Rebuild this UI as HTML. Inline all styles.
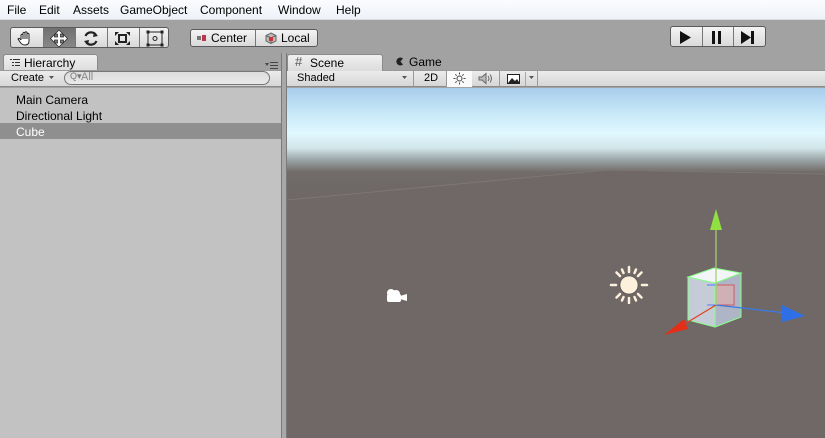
<!DOCTYPE html>
<html><head><style>
*{margin:0;padding:0;box-sizing:border-box}
body{width:825px;height:438px;overflow:hidden;background:#a2a2a2;font-family:"Liberation Sans","DejaVu Sans",sans-serif;font-size:12px;color:#000;position:relative}
.abs{position:absolute}
#menu{left:0;top:0;width:825px;height:20px;background:linear-gradient(#fbfcfe,#eef2f8);border-bottom:1px solid #d8dde6}
#menu span{position:absolute;top:3px;font-size:12px}
.btn{position:absolute;background:linear-gradient(#f4f4f4,#d9d9d9);border:1px solid #5a5a5a;border-radius:3px}
.seg{position:absolute;top:0;height:100%;border-left:1px solid #777}
.tab{position:absolute;background:linear-gradient(#f0f0f0,#dcdcdc);border:1px solid #8a8a8a;border-bottom:none;border-radius:3px 3px 0 0;font-size:12px}
.bar{position:absolute;height:17px;background:linear-gradient(#ececec,#d6d6d6);border-bottom:1px solid #8a8a8a;border-top:1px solid #9a9a9a}
</style></head><body>
<div id="menu" class="abs">
<span style="left:7px">File</span><span style="left:39px">Edit</span><span style="left:73px">Assets</span><span style="left:120px">GameObject</span><span style="left:200px">Component</span><span style="left:278px">Window</span><span style="left:336px">Help</span>
</div>
<div class="btn" style="left:10px;top:27px;width:159px;height:21px;overflow:hidden">
 <div class="abs" style="left:32px;top:0;width:32px;height:21px;background:linear-gradient(#707070,#8a8a8a)"></div>
 <div class="seg" style="left:32px"></div><div class="seg" style="left:64px"></div><div class="seg" style="left:96px"></div><div class="seg" style="left:128px"></div>
 <svg class="abs" style="left:0;top:0" width="159" height="21">
  <path d="M10 12 L10 7 Q11 5.5 12 7 L12 11 L12 5 Q13 3.5 14 5 L14 11 L14 4.5 Q15 3 16 4.5 L16 11 L16 6 Q17 4.5 18 6 L18 13 Q18 17 14 17 Q11 17 9 14 L7 11 Q8 9.5 10 12" fill="#fff" stroke="#222" stroke-width="1"/>
  <g fill="#fff" stroke="#222" stroke-width=".7"><path d="M48 2 L52 6 L49.5 6 L49.5 9 L52.5 9 L52.5 6.5 L56.5 10.5 L52.5 14.5 L52.5 12 L49.5 12 L49.5 15 L52 15 L48 19 L44 15 L46.5 15 L46.5 12 L43.5 12 L43.5 14.5 L39.5 10.5 L43.5 6.5 L43.5 9 L46.5 9 L46.5 6 L44 6Z"/></g>
  <path d="M74.5 8 A6 6 0 0 1 85 7 M85.5 13 A6 6 0 0 1 75 14" fill="none" stroke="#222" stroke-width="2.2"/>
  <path d="M83 4 L87 8 L82 9Z M77 17 L73 13 L78 12Z" fill="#222"/>
  <rect x="108" y="7" width="7" height="7" fill="none" stroke="#222" stroke-width="2"/>
  <path d="M104 4 L108 4 L104 8Z M119 4 L115 4 L119 8Z M104 17 L108 17 L104 13Z M119 17 L115 17 L119 13Z" fill="#222"/>
  <rect x="137" y="4" width="14" height="13" fill="none" stroke="#222" stroke-width="1"/>
  <circle cx="144" cy="10.5" r="2" fill="none" stroke="#222"/>
  <g fill="#222"><rect x="135.5" y="2.5" width="3" height="3"/><rect x="149.5" y="2.5" width="3" height="3"/><rect x="135.5" y="15.5" width="3" height="3"/><rect x="149.5" y="15.5" width="3" height="3"/></g>
 </svg>
</div>
<div class="btn" style="left:190px;top:29px;width:128px;height:18px">
 <div class="seg" style="left:64px"></div>
 <svg class="abs" style="left:6px;top:4px" width="10" height="9"><rect x="0" y="2" width="4" height="4" fill="#777"/><rect x="5" y="1" width="4" height="6" fill="#c0344a"/></svg>
 <span class="abs" style="left:20px;top:1px">Center</span>
 <svg class="abs" style="left:74px;top:2px" width="12" height="12"><path d="M6 1 L11 3.5 L11 9 L6 11.5 L1 9 L1 3.5Z" fill="#bbb" stroke="#666"/><path d="M6 6 L6 11 M1 3.5 L6 6 L11 3.5" stroke="#666" fill="none"/><rect x="4" y="5" width="4" height="4" fill="#c33"/></svg>
 <span class="abs" style="left:90px;top:1px">Local</span>
</div>
<div class="btn" style="left:670px;top:26px;width:96px;height:21px">
 <div class="seg" style="left:31px"></div><div class="seg" style="left:62px"></div>
 <svg class="abs" style="left:0;top:0" width="96" height="21"><path d="M9 4 L20 10.5 L9 17Z" fill="#111"/><rect x="41" y="4" width="3" height="13" fill="#111"/><rect x="47" y="4" width="3" height="13" fill="#111"/><path d="M70 4 L80 10.5 L70 17Z" fill="#111"/><rect x="80" y="4" width="3" height="13" fill="#111"/></svg>
</div>
<div class="tab" style="left:3px;top:54px;width:95px;height:17px"><span class="abs" style="left:20px;top:1px">Hierarchy</span>
 <svg class="abs" style="left:6px;top:4px" width="10" height="8"><g fill="#333"><rect x="0" y="0" width="2" height="1"/><rect x="3" y="0" width="7" height="1"/><rect x="2" y="3" width="2" height="1"/><rect x="5" y="3" width="5" height="1"/><rect x="2" y="6" width="2" height="1"/><rect x="5" y="6" width="5" height="1"/></g></svg></div>
<svg class="abs" style="left:265px;top:61px" width="14" height="8"><path d="M0 2 L4 2 L2 5Z" fill="#444"/><g fill="#444"><rect x="5" y="1" width="8" height="1"/><rect x="5" y="4" width="8" height="1"/><rect x="5" y="7" width="8" height="1"/></g></svg>
<div class="bar" style="left:0;top:70px;width:282px"></div>
<span class="abs" style="left:11px;top:72px;font-size:11px">Create</span>
<svg class="abs" style="left:49px;top:76px" width="6" height="4"><path d="M0 0 L5 0 L2.5 3Z" fill="#555"/></svg>
<div class="abs" style="left:64px;top:71px;width:206px;height:14px;border:1px solid #777;border-radius:7px;background:linear-gradient(#dcdcdc,#e8e8e8)"></div>
<span class="abs" style="left:70px;top:71px;font-size:9px;color:#777">Q▾</span><span class="abs" style="left:81px;top:71px;font-size:11px;color:#888">All</span>
<div class="abs" style="left:0;top:88px;width:282px;height:350px;background:#c2c2c2"></div>
<span class="abs" style="left:16px;top:93px">Main Camera</span>
<span class="abs" style="left:16px;top:109px">Directional Light</span>
<div class="abs" style="left:0;top:123px;width:282px;height:16px;background:#8f8f8f"></div>
<span class="abs" style="left:16px;top:125px;color:#fff">Cube</span>
<div class="abs" style="left:281px;top:53px;width:6px;height:385px;background:#a8a8a8;border-left:1px solid #7a7a7a;border-right:1px solid #7a7a7a"></div>
<div class="tab" style="left:287px;top:54px;width:96px;height:17px;z-index:2"><span class="abs" style="left:22px;top:1px">Scene</span><span class="abs" style="left:7px;top:-1px;font-size:13px;color:#555">#</span></div>
<span class="abs" style="left:409px;top:55px">Game</span>
<svg class="abs" style="left:396px;top:57px" width="9" height="9"><path d="M7 1.5 A4 4 0 1 0 7 7.5 L4.5 4.5Z" fill="#222"/></svg>
<div class="bar" style="left:287px;top:70px;width:538px"></div>
<span class="abs" style="left:297px;top:72px;font-size:11px">Shaded</span>
<svg class="abs" style="left:402px;top:76px" width="6" height="4"><path d="M0 0 L5 0 L2.5 3Z" fill="#555"/></svg>
<div class="abs" style="left:413px;top:71px;width:1px;height:16px;background:#999"></div>
<span class="abs" style="left:424px;top:72px;font-size:11px">2D</span>
<div class="abs" style="left:446px;top:71px;width:1px;height:16px;background:#999"></div>
<div class="abs" style="left:447px;top:71px;width:25px;height:16px;background:#fafafa"></div>
<svg class="abs" style="left:453px;top:72px" width="13" height="13"><circle cx="6.5" cy="6.5" r="2.5" fill="none" stroke="#444"/><path d="M6.5 0.5v2M6.5 10.5v2M0.5 6.5h2M10.5 6.5h2M2.3 2.3l1.4 1.4M9.3 9.3l1.4 1.4M2.3 10.7l1.4-1.4M9.3 3.7l1.4-1.4" stroke="#444"/></svg>
<svg class="abs" style="left:478px;top:72px" width="16" height="13"><path d="M1 5 L4 5 L8 1.5 L8 11.5 L4 8 L1 8Z" fill="#bbb" stroke="#666"/><path d="M10 4 Q12 6.5 10 9 M12 2.5 Q15 6.5 12 10.5" stroke="#666" fill="none"/></svg>
<div class="abs" style="left:499px;top:71px;width:1px;height:16px;background:#999"></div>
<svg class="abs" style="left:507px;top:74px" width="13" height="10"><rect x=".5" y=".5" width="12" height="9" fill="#fff" stroke="#222"/><path d="M1 9 L5 4 L8 7 L10 5 L12 8 L12 9Z" fill="#222"/></svg>
<div class="abs" style="left:525px;top:72px;width:1px;height:14px;background:#aaa"></div>
<svg class="abs" style="left:529px;top:76px" width="6" height="4"><path d="M0 0 L5 0 L2.5 3Z" fill="#555"/></svg>
<div class="abs" style="left:537px;top:71px;width:1px;height:16px;background:#999"></div>
<div class="abs" style="left:287px;top:88px;width:538px;height:350px;background:linear-gradient(#a8cdec 0px,#c8e8f8 25px,#e0f8ff 45px,#d2e6ea 60px,#9aa4a6 72px,#716c6a 84px,#6e6866 100px,#686160 200px,#635b58 350px);overflow:hidden">
 <svg width="538" height="350" style="position:absolute;left:0;top:0">
  <path d="M0 112 L320 82 L538 86 L538 350 L0 350Z" fill="#6f6866"/>
  <path d="M0 112 L320 82 L538 86" stroke="#7d7673" stroke-width="1" fill="none"/>
 </svg>
</div>
<svg class="abs" style="left:382px;top:287px" width="28" height="18"><circle cx="9" cy="6" r="4" fill="#fff"/><circle cx="14" cy="7" r="4" fill="#fff"/><rect x="5" y="7" width="14" height="8" rx="2" fill="#fff"/><path d="M18 9 L25 7 L25 14 L18 12Z" fill="#fff"/></svg>
<svg class="abs" style="left:607px;top:264px" width="46" height="40"><circle cx="22" cy="21" r="9" fill="#fdf1dc" stroke="#333" stroke-width=".5"/><g stroke="#fdf1dc" stroke-width="2.5" stroke-linecap="round"><path d="M22 3v5M22 34v5M4 21h5M35 21h5M9.5 8.5l3.5 3.5M31 30l3.5 3.5M9.5 33.5l3.5-3.5M31 12l3.5-3.5M15 5.5l1.5 3.5M29 5.5l-1.5 3.5M15 36.5l1.5-3.5M29 36.5l-1.5-3.5"/></g></svg>
<svg class="abs" style="left:660px;top:205px" width="150" height="135">
 <path d="M28 72 L55 78 L55 122 L28 115Z" fill="#c5ccd8" stroke="#8f8" stroke-width="1"/>
 <path d="M55 78 L81 68 L81 112 L55 122Z" fill="#aeb5c6" stroke="#8f8" stroke-width="1"/>
 <path d="M28 72 L55 78 L81 68 L54 63Z" fill="#f4f5f8" stroke="#8f8" stroke-width="1"/>
 <rect x="56" y="80" width="18" height="20" fill="#d8b0b0" opacity=".8" stroke="#d44"/>
 <path d="M47 80 L56 80 L56 100 L47 100" stroke="#57f" fill="none"/>
 <line x1="56" y1="100" x2="126" y2="108" stroke="#3a7ae8" stroke-width="1.2"/>
 <path d="M122 100 L145 111 L122 117 Z" fill="#2f6fe6"/>
 <line x1="56" y1="100" x2="18" y2="123" stroke="#e04020" stroke-width="1.2"/>
 <path d="M4 130 L24 114 L28 124Z" fill="#e0301a"/>
 <line x1="56" y1="100" x2="56" y2="25" stroke="#a0d070" stroke-width="1.3"/>
 <path d="M50 25 L56 4 L62 25Z" fill="#8fe040"/>
</svg>
</body></html>
